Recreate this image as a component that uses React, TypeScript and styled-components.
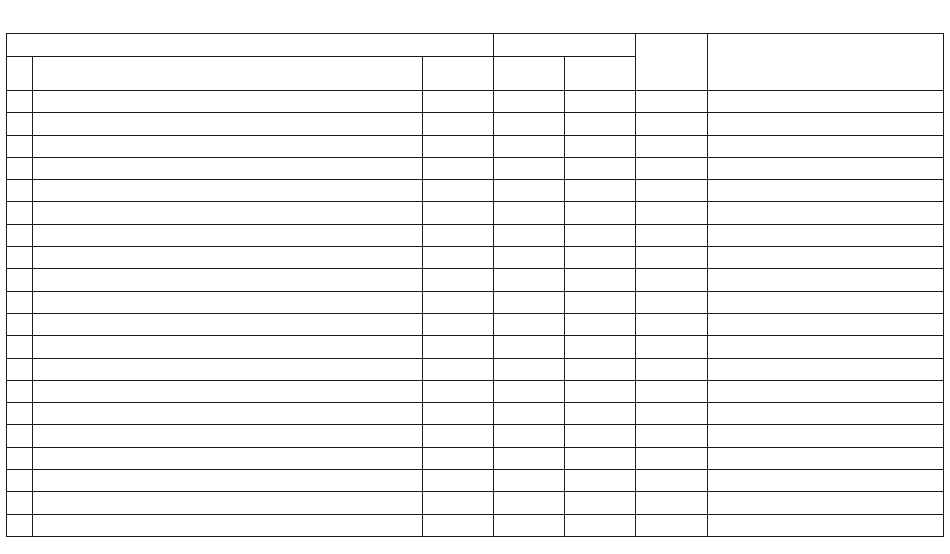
import React from 'react';
import styled, { createGlobalStyle } from 'styled-components';

const GlobalStyle = createGlobalStyle`
  html, body {
    margin: 0;
    padding: 0;
    background: #fff;
    font-family: "Liberation Sans", Arial, sans-serif;
  }
`;

const Page = styled.div`
  padding: 33px 0 0 6px;
`;

const Grid = styled.table`
  border-collapse: collapse;
  table-layout: fixed;
  width: 937px;
  color: #1b1b1b;
  font-size: 12px;
`;

const Cell = styled.td`
  border: 1px solid #1b1b1b;
  padding: 0;
`;

const HeadRow = styled.tr<{ $h: number }>`
  height: ${(p) => p.$h}px;
`;

const BodyRow = styled.tr`
  height: 22.3px;
`;

const widths = [26, 390, 71, 71, 71, 72, 236];
const rows = Array.from({ length: 20 }, (_, i) => i);

const App: React.FC = () => {
  return (
    <Page>
      <GlobalStyle />
      <Grid>
        <colgroup>
          {widths.map((w, i) => (
            <col key={i} style={{ width: w }} />
          ))}
        </colgroup>
        <thead>
          <HeadRow $h={23}>
            <Cell colSpan={3} />
            <Cell colSpan={2} />
            <Cell rowSpan={2} />
            <Cell rowSpan={2} />
          </HeadRow>
          <HeadRow $h={34}>
            <Cell />
            <Cell />
            <Cell />
            <Cell />
            <Cell />
          </HeadRow>
        </thead>
        <tbody>
          {rows.map((r) => (
            <BodyRow key={r}>
              {widths.map((_, c) => (
                <Cell key={c} />
              ))}
            </BodyRow>
          ))}
        </tbody>
      </Grid>
    </Page>
  );
};

export default App;
